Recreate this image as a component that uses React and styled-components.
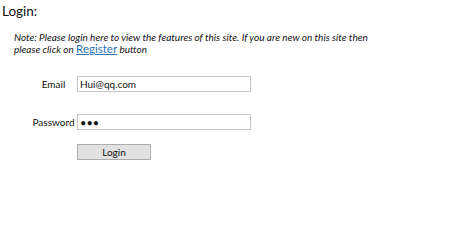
import React from "react";
import styled, { createGlobalStyle } from "styled-components";

const GlobalStyle = createGlobalStyle`
  body {
    margin: 0;
    background: #ffffff;
    color: #111;
    font-family: Lato, "Noto Sans", sans-serif;
  }
`;

const Page = styled.div`
  padding: 1px 2px;
`;

const Title = styled.h2`
  margin: 0;
  font-size: 13.5px;
  font-weight: normal;
  line-height: 20px;
  color: #111;
`;

const Note = styled.p`
  margin: 11px 0 0 12px;
  font-size: 10px;
  font-style: italic;
  line-height: 11px;
  color: #111;
`;

const RegisterLink = styled.a`
  font-style: normal;
  font-size: 11.5px;
  line-height: 1;
  color: #2a72b8;
  text-decoration: underline;
`;

const Form = styled.div`
  display: grid;
  grid-template-columns: 47px 174px;
  margin: 21px 0 0 28px;
  row-gap: 22px;
  align-items: center;
`;

const Label = styled.label`
  font-size: 10px;
  text-align: center;
  color: #111;
`;

const Input = styled.input`
  box-sizing: border-box;
  width: 174px;
  height: 16px;
  margin: 0;
  padding: 0 2px;
  border: 1px solid #c4c4c4;
  font-family: inherit;
  font-size: ${(p) => (p.type === "password" ? "11px" : "10px")};
  color: #111;
  outline: none;
`;

const Button = styled.button`
  grid-column: 2;
  box-sizing: border-box;
  width: 74px;
  height: 16px;
  margin-top: -8px;
  padding: 0;
  background: #e1e1e1;
  border: 1px solid #adadad;
  font-family: inherit;
  font-size: 10px;
  color: #111;
`;

export default function App() {
  return (
    <Page>
      <GlobalStyle />
      <Title>Login:</Title>
      <Note>
        Note: Please login here to view the features of this site. If you are new on this site then
        <br />
        please click on <RegisterLink href="#">Register</RegisterLink> button
      </Note>
      <Form>
        <Label htmlFor="email">Email</Label>
        <Input id="email" type="text" defaultValue="Hui@qq.com" />
        <Label htmlFor="password">Password</Label>
        <Input id="password" type="password" defaultValue="abc" />
        <Button type="button">Login</Button>
      </Form>
    </Page>
  );
}
